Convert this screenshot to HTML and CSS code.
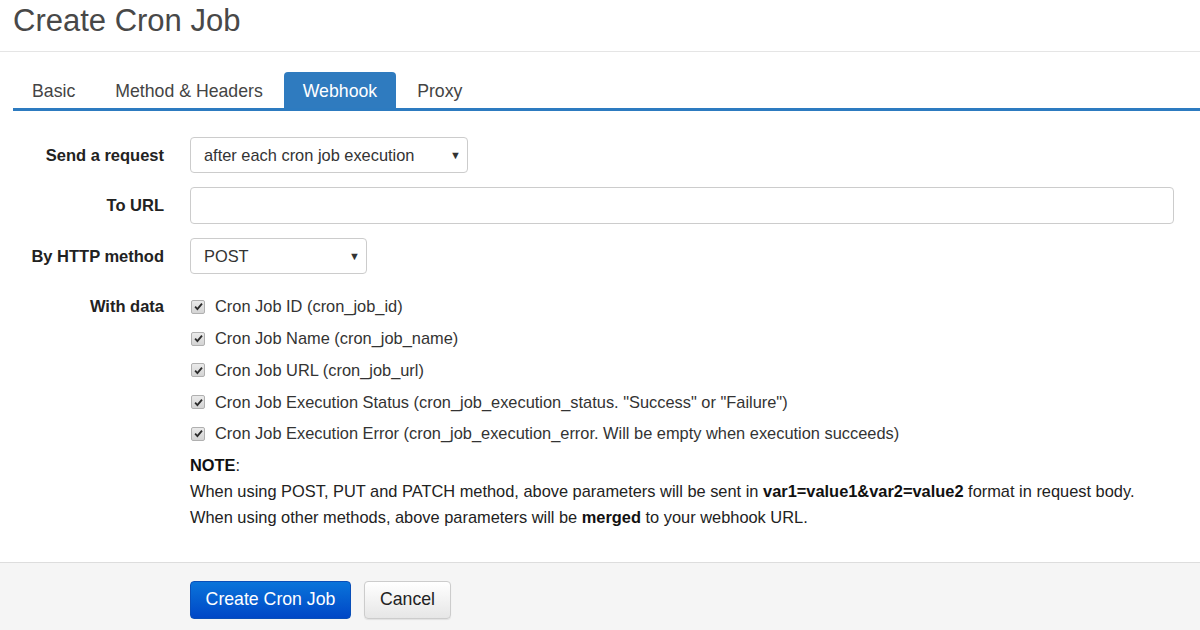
FILE: index.html
```html
<!DOCTYPE html>
<html>
<head>
<meta charset="utf-8">
<link rel="stylesheet" href="styles.css">
</head>
<body>
<div class="header"><h1 class="title">Create Cron Job</h1></div>
<div class="tabs">
  <div class="tab">Basic</div>
  <div class="tab">Method &amp; Headers</div>
  <div class="tab active">Webhook</div>
  <div class="tab">Proxy</div>
</div>
<div class="form">
  <div class="label">Send a request</div>
  <div class="field"><div class="select sel1"><span>after each cron job execution</span><span class="arrow">▼</span></div></div>
  <div class="label">To URL</div>
  <div class="field"><div class="input"></div></div>
  <div class="label">By HTTP method</div>
  <div class="field"><div class="select sel2"><span>POST</span><span class="arrow">▼</span></div></div>
  <div class="label label-top">With data</div>
  <div class="field">
    <div class="checks">
      <div class="check"><span class="box"><svg viewBox="0 0 12 12" width="11" height="11"><path d="M2.3 6.2 L4.8 8.8 L9.8 2.8" fill="none" stroke="#2b2b2b" stroke-width="2"/></svg></span>Cron Job ID (cron_job_id)</div>
      <div class="check"><span class="box"><svg viewBox="0 0 12 12" width="11" height="11"><path d="M2.3 6.2 L4.8 8.8 L9.8 2.8" fill="none" stroke="#2b2b2b" stroke-width="2"/></svg></span>Cron Job Name (cron_job_name)</div>
      <div class="check"><span class="box"><svg viewBox="0 0 12 12" width="11" height="11"><path d="M2.3 6.2 L4.8 8.8 L9.8 2.8" fill="none" stroke="#2b2b2b" stroke-width="2"/></svg></span>Cron Job URL (cron_job_url)</div>
      <div class="check"><span class="box"><svg viewBox="0 0 12 12" width="11" height="11"><path d="M2.3 6.2 L4.8 8.8 L9.8 2.8" fill="none" stroke="#2b2b2b" stroke-width="2"/></svg></span>Cron Job Execution Status (cron_job_execution_status. "Success" or "Failure")</div>
      <div class="check"><span class="box"><svg viewBox="0 0 12 12" width="11" height="11"><path d="M2.3 6.2 L4.8 8.8 L9.8 2.8" fill="none" stroke="#2b2b2b" stroke-width="2"/></svg></span>Cron Job Execution Error (cron_job_execution_error. Will be empty when execution succeeds)</div>
    </div>
    <div class="note">
      <p><b>NOTE</b>:</p>
      <p>When using POST, PUT and PATCH method, above parameters will be sent in <b>var1=value1&amp;var2=value2</b> format in request body.</p>
      <p>When using other methods, above parameters will be <b>merged</b> to your webhook URL.</p>
    </div>
  </div>
</div>
<div class="footer">
  <div class="btn btn-primary">Create Cron Job</div>
  <div class="btn btn-default">Cancel</div>
</div>
</body>
</html>
```
FILE: styles.css
```css
html, body {
  margin: 0;
  padding: 0;
  background: #fff;
  font-family: "Liberation Sans", Arial, sans-serif;
  color: #333;
}
.header {
  height: 52px;
  border-bottom: 1px solid #e5e5e5;
  padding: 0 13px;
  box-sizing: border-box;
}
.title {
  margin: 0;
  padding-top: 3px;
  font-size: 31px;
  font-weight: normal;
  line-height: 36px;
  color: #484848;
}
.tabs {
  display: flex;
  margin: 20px 0 0 13px;
  border-bottom: 3px solid #2d7bc0;
  height: 36px;
}
.tab {
  padding: 0 19px;
  margin-right: 2px;
  font-size: 17.7px;
  line-height: 38px;
  color: #444;
  border-radius: 4px 4px 0 0;
}
.tab.active {
  background: #2f7bbf;
  color: #fff;
}
.form {
  display: grid;
  grid-template-columns: 151px 1fr;
  column-gap: 26px;
  row-gap: 14px;
  margin: 26px 26px 0 13px;
}
.label {
  text-align: right;
  font-weight: bold;
  font-size: 16.5px;
  color: #222;
  display: flex;
  align-items: center;
  justify-content: flex-end;
  height: 36px;
}
.label-top {
  height: 31.75px;
  margin-top: 3px;
}
.field {
  display: flex;
  flex-direction: column;
}
.select, .input {
  height: 36px;
  box-sizing: border-box;
  border: 1px solid #ccc;
  border-radius: 4px;
  background: #fff;
}
.select {
  display: flex;
  align-items: center;
  justify-content: space-between;
  padding: 0 6px 0 13px;
  font-size: 16.4px;
  color: #333;
}
.sel1 { width: 278px; }
.sel2 { width: 177px; }
.input { width: 100%; height: 37px; }
.arrow {
  font-size: 11px;
  color: #333;
}
.checks {
  margin-top: 3px;
}
.check {
  display: flex;
  align-items: center;
  height: 31.75px;
  font-size: 16.4px;
  color: #333;
}
.box {
  width: 14px;
  height: 14px;
  box-sizing: border-box;
  margin: 0 10px 0 1px;
  border: 1px solid #b0b0b0;
  border-radius: 2px;
  background: linear-gradient(#eaeaea, #d4d4d4);
  display: flex;
  align-items: center;
  justify-content: center;
}
.box svg { display: block; }
.note {
  margin-top: 2px;
  font-size: 16.4px;
  line-height: 26px;
  color: #222;
}
.note p { margin: 0; }
.note b { color: #111; }
.footer {
  margin-top: 32px;
  border-top: 1px solid #ddd;
  background: #f5f5f5;
  height: 80px;
  padding: 18px 0 0 190px;
  box-sizing: border-box;
  display: flex;
  gap: 13px;
  align-items: flex-start;
}
.btn {
  height: 38px;
  box-sizing: border-box;
  border-radius: 4px;
  font-size: 17.7px;
  display: flex;
  align-items: center;
  justify-content: center;
  padding: 0;
  white-space: nowrap;
}
.btn-primary {
  width: 161px;
  color: #fff;
  background: linear-gradient(#0a74da, #0047c6);
  border: 1px solid #0a4fb8;
}
.btn-default {
  width: 87px;
  color: #222;
  background: linear-gradient(#ffffff, #e6e6e6);
  border: 1px solid #ccc;
  box-shadow: 0 1px 1px rgba(0,0,0,0.08);
}
```
